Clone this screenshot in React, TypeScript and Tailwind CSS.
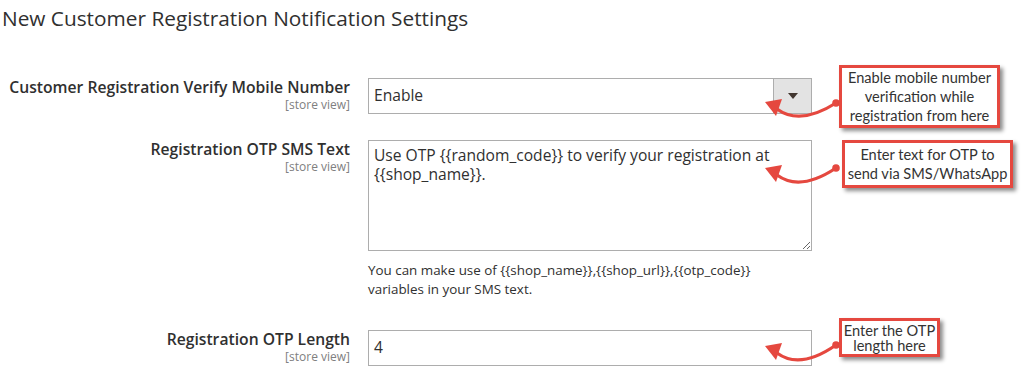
import React from "react";

function Arrow({ t, d }: { t: number; d: number }) {
  return (
    <g>
      <path
        d={`M 777 ${t + 7} Q 800 ${t + 24} 836 ${d}`}
        fill="none"
        stroke="#e5483f"
        strokeWidth="3.2"
        strokeLinecap="round"
      />
      <polygon points={`765,${t} 782,${t - 3} 776,${t + 14}`} fill="#e5483f" />
      <circle cx="836" cy={d} r="3.8" fill="#e5483f" />
    </g>
  );
}

function Label({ title }: { title: string }) {
  return (
    <div className="w-[350px] shrink-0 text-right">
      <div className="text-[15.7px] leading-[19px] font-semibold text-[#303030] whitespace-nowrap">{title}</div>
      <div className="text-[12px] leading-[14px] text-[#808080] mt-[1px]">[store view]</div>
    </div>
  );
}

export default function App() {
  return (
    <div className="relative w-[1027px] h-[374px] overflow-hidden bg-white text-[#303030] font-['Open_Sans',sans-serif]">
      <div className="pl-[2px] pt-[5px] text-[20.8px] leading-[27px] text-[#303030] whitespace-nowrap">
        New Customer Registration Notification Settings
      </div>

      <div className="mt-[46px] flex">
        <Label title="Customer Registration Verify Mobile Number" />
        <div className="ml-[18px] w-[444px] h-[36px] border border-[#adadad] flex bg-white">
          <div className="flex-1 flex items-center pl-[5px] text-[15.6px]">Enable</div>
          <div className="w-[38px] bg-[#e3e3e3] border-l border-[#adadad] flex items-center justify-center">
            <div className="w-0 h-0 border-l-[5px] border-r-[5px] border-t-[6px] border-l-transparent border-r-transparent border-t-[#41362f]" />
          </div>
        </div>
      </div>

      <div className="mt-[26px] flex">
        <Label title="Registration OTP SMS Text" />
        <div className="ml-[18px] w-[444px]">
          <textarea
            readOnly
            defaultValue="Use OTP {{random_code}} to verify your registration at {{shop_name}}."
            className="block w-[444px] h-[111px] border border-[#adadad] px-[5px] pt-[5px] text-[15.6px] leading-[18.5px] text-[#303030] outline-none resize-y font-['Open_Sans',sans-serif]"
          />
          <div className="mt-[10px] text-[13.4px] leading-[19px] text-[#303030] whitespace-nowrap">
            You can make use of {"{{shop_name}},{{shop_url}},{{otp_code}}"}
            <br />
            variables in your SMS text.
          </div>
        </div>
      </div>

      <div className="mt-[31px] flex">
        <Label title="Registration OTP Length" />
        <div className="ml-[18px] w-[444px] h-[36px] border border-[#adadad] flex items-center pl-[5px] text-[15.6px]">
          4
        </div>
      </div>

      <svg className="absolute inset-0 pointer-events-none" width="1027" height="374">
        <Arrow t={102} d={103} />
        <Arrow t={168} d={168} />
        <Arrow t={346} d={345} />
      </svg>

      <div className="absolute left-[839px] top-[65px] w-[161px] h-[63px] border-[3px] border-[#e5483f] bg-white shadow-[3px_3px_4px_rgba(0,0,0,0.45)] flex flex-col items-center justify-center text-center font-['Lato',sans-serif] text-[14.6px] leading-[19px] text-[#333] whitespace-nowrap">
        <div>Enable mobile number</div>
        <div>verification while</div>
        <div>registration from here</div>
      </div>
      <div className="absolute left-[842px] top-[140px] w-[171px] h-[48px] border-[3px] border-[#e5483f] bg-white shadow-[3px_3px_4px_rgba(0,0,0,0.45)] flex flex-col items-center justify-center text-center font-['Lato',sans-serif] text-[14.6px] leading-[19px] text-[#333] whitespace-nowrap">
        <div>Enter text for OTP to</div>
        <div>send via SMS/WhatsApp</div>
      </div>
      <div className="absolute left-[839px] top-[318px] w-[101px] h-[39px] border-[3px] border-[#e5483f] bg-white shadow-[3px_3px_4px_rgba(0,0,0,0.45)] flex flex-col items-center justify-center text-center font-['Lato',sans-serif] text-[14.6px] leading-[15px] text-[#333] whitespace-nowrap">
        <div>Enter the OTP</div>
        <div>length here</div>
      </div>
    </div>
  );
}
